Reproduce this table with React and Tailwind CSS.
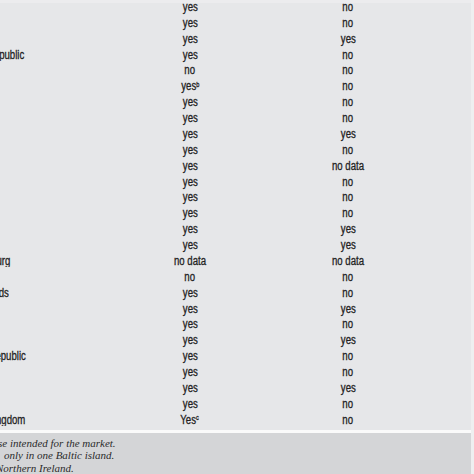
import React from "react";

const rows = [
  ["Belgium", "yes", "no"],
  ["Bulgaria", "yes", "no"],
  ["Cyprus", "yes", "yes"],
  ["Czech Republic", "yes", "no"],
  ["Denmark", "no", "no"],
  ["Estonia", "yes", "no", "b"],
  ["Finland", "yes", "no"],
  ["France", "yes", "no"],
  ["Germany", "yes", "yes"],
  ["Greece", "yes", "no"],
  ["Hungary", "yes", "no data"],
  ["Ireland", "yes", "no"],
  ["Italy", "yes", "no"],
  ["Latvia", "yes", "no"],
  ["Lithuania", "yes", "yes"],
  ["Malta", "yes", "yes"],
  ["Luxembourg", "no data", "no data"],
  ["Malta", "no", "no"],
  ["Netherlands", "yes", "no"],
  ["Poland", "yes", "yes"],
  ["Portugal", "yes", "no"],
  ["Romania", "yes", "yes"],
  ["Slovak Republic", "yes", "no"],
  ["Slovenia", "yes", "no"],
  ["Spain", "yes", "yes"],
  ["Sweden", "yes", "no"],
  ["United Kingdom", "Yes", "no", "c"],
];

export default function App() {
  return (
    <div className="flex w-[474px] h-[474px] overflow-hidden bg-[#e6e7e9]">
      <div className="flex flex-col w-[471px] h-full">
        <div className="h-[3px] bg-[#ececee] shrink-0" />
        <div
          className="flex flex-col mt-[-4px] shrink-0 text-[12px] text-[#222] [-webkit-text-stroke:0.3px_#222]"
          style={{ fontFamily: '"Liberation Sans", Arial, sans-serif' }}
        >
          {rows.map(([country, a, b, sup], i) => (
            <div key={i} className="flex items-center h-[15.88px] leading-none">
              <div className="w-[150px] overflow-hidden whitespace-nowrap">
                <span className="inline-block ml-[-43px] origin-left scale-x-[0.8]">{country}</span>
              </div>
              <div className="w-[80px] flex justify-center whitespace-nowrap">
                <span className="inline-block scale-x-[0.8]">
                  {a}
                  {sup && <sup className="text-[7px]">{sup}</sup>}
                </span>
              </div>
              <div className="w-[78px]" />
              <div className="w-[80px] flex justify-center whitespace-nowrap">
                <span className="inline-block scale-x-[0.8]">{b}</span>
              </div>
            </div>
          ))}
        </div>
        <div className="mt-[2px] h-[3px] bg-[#fafafa] shrink-0" />
        <div
          className="flex-1 bg-[#d4d5d7] pt-[4px] text-[11px] leading-[12.5px] italic text-[#2b2b2b] overflow-hidden whitespace-nowrap"
          style={{ fontFamily: '"Liberation Serif", "Times New Roman", serif' }}
        >
          <div className="ml-[-2px]">se intended for the market.</div>
          <div className="ml-[4px]">only in one Baltic island.</div>
          <div className="ml-[-4px]">Northern Ireland.</div>
        </div>
      </div>
      <div className="w-[3px] h-full bg-[#eeeff0]" />
    </div>
  );
}
